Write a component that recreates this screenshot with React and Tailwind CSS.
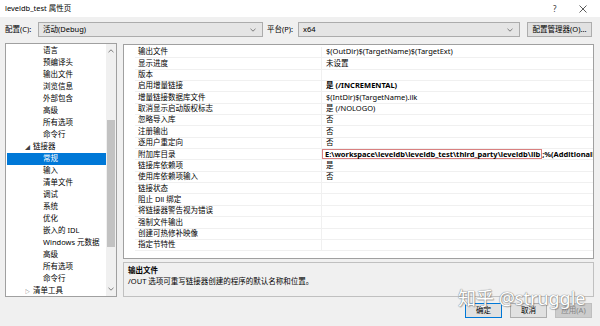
import React from 'react';

const treeItems = [
    { t: '语言', l: 2 },
    { t: '预编译头', l: 2 },
    { t: '输出文件', l: 2 },
    { t: '浏览信息', l: 2 },
    { t: '外部包含', l: 2 },
    { t: '高级', l: 2 },
    { t: '所有选项', l: 2 },
    { t: '命令行', l: 2 },
    { t: '链接器', l: 1, open: true },
    { t: '常规', l: 2, sel: true },
    { t: '输入', l: 2 },
    { t: '清单文件', l: 2 },
    { t: '调试', l: 2 },
    { t: '系统', l: 2 },
    { t: '优化', l: 2 },
    { t: '嵌入的 IDL', l: 2 },
    { t: 'Windows 元数据', l: 2 },
    { t: '高级', l: 2 },
    { t: '所有选项', l: 2 },
    { t: '命令行', l: 2 },
    { t: '清单工具', l: 1, open: false },
];

const rows = [
    ['输出文件', '$(OutDir)$(TargetName)$(TargetExt)'],
    ['显示进度', '未设置'],
    ['版本', ''],
    ['启用增量链接', '是 (/INCREMENTAL)', 'bold'],
    ['增量链接数据库文件', '$(IntDir)$(TargetName).ilk'],
    ['取消显示启动版权标志', '是 (/NOLOGO)'],
    ['忽略导入库', '否'],
    ['注册输出', '否'],
    ['逐用户重定向', '否'],
    ['附加库目录', 'E:\\workspace\\leveldb\\leveldb_test\\third_party\\leveldb\\lib', 'edit'],
    ['链接库依赖项', '是'],
    ['使用库依赖项输入', '否'],
    ['链接状态', ''],
    ['阻止 Dll 绑定', ''],
    ['将链接器警告视为错误', ''],
    ['强制文件输出', ''],
    ['创建可热修补映像', ''],
    ['指定节特性', ''],
];

function Chevron() {
    return (
        <svg width="6" height="4" viewBox="0 0 6 4" className="shrink-0">
            <path d="M0.5 0.8 L3 3.2 L5.5 0.8" fill="none" stroke="#606060" strokeWidth="0.8" />
        </svg>
    );
}

function Combo({ text, width }) {
    return (
        <div className={`${width} h-[15px] flex items-center justify-between bg-[#e5e5e5] border border-[#acacac] pl-[4px] pr-[6px]`}>
            <span>{text}</span>
            <Chevron />
        </div>
    );
}

function TreeRow({ item }) {
    return (
        <div className={`h-[12px] flex items-center whitespace-nowrap ${item.sel ? 'bg-[#0078d7] text-white ml-[1px]' : ''}`}>
            {item.l === 1 ? (
                <div className="flex items-center pl-[19px]">
                    <span className="w-[8px] text-[5px] text-[#404040]">{item.open ? '◢' : '▷'}</span>
                    <span>{item.t}</span>
                </div>
            ) : (
                <span className={item.sel ? 'pl-[36px]' : 'pl-[37px]'}>{item.t}</span>
            )}
        </div>
    );
}

function GridRow({ name, value, kind }) {
    return (
        <div className="h-[11.35px] flex border-b border-[#f0f0f0] ml-[11px] whitespace-nowrap">
            <div className="w-[186px] pl-[3px] flex items-center shrink-0">{name}</div>
            <div className="flex-1 flex items-center border-l border-[#f0f0f0] overflow-hidden">
                {kind === 'edit' ? (
                    <>
                        <span className="font-bold border border-[#d98080] h-full flex items-center pl-[2px] pr-[1px]">{value}</span>
                        <span className="font-bold">;%(AdditionalLibraryDirectories)</span>
                    </>
                ) : (
                    <span className={`pl-[4px] ${kind === 'bold' ? 'font-bold' : ''}`}>{value}</span>
                )}
            </div>
        </div>
    );
}

export default function App() {
    return (
        <div className="w-[600px] h-[326px] relative overflow-hidden bg-[#f0f0f0] text-[7.5px] leading-none text-black font-['Noto_Sans','Noto_Sans_CJK_SC',sans-serif]">
            {/* Title bar */}
            <div className="h-[17px] bg-white flex items-center justify-between pl-[5px]">
                <span>leveldb_test 属性页</span>
                <div className="flex items-center">
                    <span className="w-[26px] text-[8px] text-[#333]">?</span>
                    <svg width="8" height="8" viewBox="0 0 8 8" className="mr-[13px]">
                        <path d="M0.5 0.5 L7.5 7.5 M7.5 0.5 L0.5 7.5" stroke="#333" strokeWidth="0.8" />
                    </svg>
                </div>
            </div>

            {/* Config row */}
            <div className="mt-[5px] h-[15px] flex items-center pl-[5px]">
                <span className="w-[33px]">配置(C):</span>
                <Combo text="活动(Debug)" width="w-[225px]" />
                <span className="w-[31px] ml-[4px]">平台(P):</span>
                <Combo text="x64" width="w-[222px]" />
                <div className="ml-[7px] w-[65px] h-[15px] flex items-center justify-center bg-[#e1e1e1] border border-[#adadad]">
                    配置管理器(O)...
                </div>
            </div>

            {/* Main */}
            <div className="mt-[6px] h-[254px] flex pl-[5px]">
                {/* Tree */}
                <div className="w-[112px] h-full bg-white border border-[#a0a0a0] flex overflow-hidden">
                    <div className="flex-1 pt-[1px] overflow-hidden">
                        {treeItems.map((item, i) => (
                            <TreeRow key={i} item={item} />
                        ))}
                    </div>
                    <div className="w-[10px] bg-[#f0f0f0] flex flex-col items-center">
                        <div className="h-[14px] flex items-center justify-center">
                            <svg width="6" height="4" viewBox="0 0 6 4">
                                <path d="M0.5 3.2 L3 0.8 L5.5 3.2" fill="none" stroke="#606060" strokeWidth="0.8" />
                            </svg>
                        </div>
                        <div className="flex-1 w-full px-[1px]">
                            <div className="mt-[62px] h-[127px] bg-[#c2c2c2]" />
                        </div>
                        <div className="h-[14px] flex items-center justify-center">
                            <Chevron />
                        </div>
                    </div>
                </div>

                {/* Right column */}
                <div className="w-[471px] ml-[6px] flex flex-col">
                    <div className="flex-1 mt-[1px] bg-white border border-[#a0a0a0] pt-[2px] overflow-hidden">
                        {rows.map(([n, v, k], i) => (
                            <GridRow key={i} name={n} value={v} kind={k} />
                        ))}
                    </div>
                    <div className="h-[35px] mt-[3px] border border-[#c0c0c0] px-[4px] pt-[4px] flex flex-col gap-[3px]">
                        <span className="font-bold">输出文件</span>
                        <span>/OUT 选项可重写链接器创建的程序的默认名称和位置。</span>
                    </div>
                </div>
            </div>

            {/* Buttons */}
            <div className="mt-[6px] h-[15px] flex justify-end gap-[8px] pr-[8px]">
                <div className="w-[37px] h-full flex items-center justify-center bg-[#e1e1e1] border border-[#0078d7]">确定</div>
                <div className="w-[37px] h-full flex items-center justify-center bg-[#e1e1e1] border border-[#adadad]">取消</div>
                <div className="w-[37px] h-full flex items-center justify-center bg-[#cccccc] border border-[#bfbfbf] text-[#838383]">应用(A)</div>
            </div>

            {/* Watermark */}
            <div className="absolute left-[458px] top-[289px] text-[18px] leading-none text-white whitespace-nowrap [text-shadow:0_0_1px_#808080,0_0_1px_#808080,1px_1px_1px_rgba(0,0,0,0.25)]">
                知乎 @struggle
            </div>
        </div>
    );
}
